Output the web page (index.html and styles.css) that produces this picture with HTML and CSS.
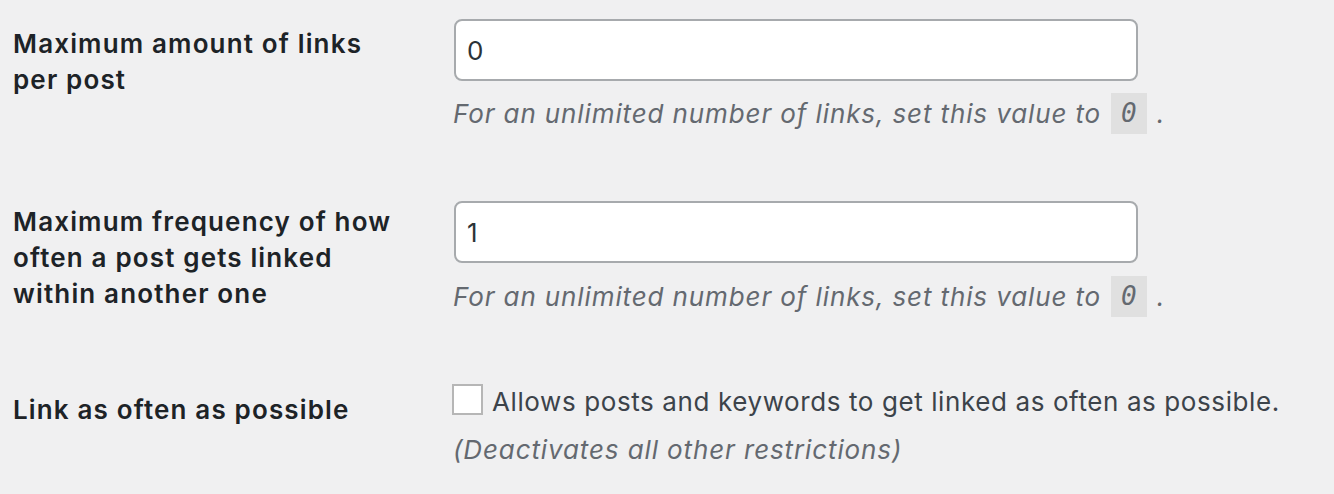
FILE: index.html
```html
<!DOCTYPE html>
<html lang="en">
<head>
<meta charset="utf-8">
<title>Settings</title>
<link rel="stylesheet" href="styles.css">
</head>
<body>
<div class="form-table">
  <div class="row row-1">
    <div class="th">Maximum amount of links per post</div>
    <div class="td">
      <input class="text-input" type="text" value="0">
      <p class="description">For an unlimited number of links, set this value to <code>0</code>.</p>
    </div>
  </div>
  <div class="row row-2">
    <div class="th">Maximum frequency of how often a post gets linked within another one</div>
    <div class="td">
      <input class="text-input" type="text" value="1">
      <p class="description">For an unlimited number of links, set this value to <code>0</code>.</p>
    </div>
  </div>
  <div class="row row-3">
    <div class="th">Link as often as possible</div>
    <div class="td">
      <label class="check-label"><span class="checkbox"></span>Allows posts and keywords to get linked as often as possible.</label>
      <p class="description plain">(Deactivates all other restrictions)</p>
    </div>
  </div>
</div>
</body>
</html>
```
FILE: styles.css
```css
html, body {
  margin: 0;
  padding: 0;
  background: #f0f0f1;
}
body {
  font-family: Inter, "Noto Sans", "Liberation Sans", sans-serif;
  color: #3c434a;
  width: 1334px;
  height: 494px;
  overflow: hidden;
}
.form-table {
  padding-left: 13px;
}
.row {
  display: grid;
  grid-template-columns: 440px 684px;
  align-items: start;
}
.th {
  font-size: 26px;
  font-weight: 600;
  line-height: 36px;
  letter-spacing: 1.15px;
  color: #1d2327;
  width: 400px;
}
.row-1 { padding-top: 19px; }
.row-1 .th { padding-top: 7px; }
.row-2 { padding-top: 67px; }
.row-2 .th { padding-top: 3px; }
.row-3 { padding-top: 67px; }
.row-3 .th { padding-top: 8px; }

.text-input {
  display: block;
  box-sizing: border-box;
  width: 684px;
  height: 62px;
  margin: 0 0 0 1px;
  padding: 0 11px;
  border: 2px solid #a7aaad;
  border-radius: 8px;
  background: #fff;
  font-family: inherit;
  font-size: 26px;
  letter-spacing: 0.6px;
  color: #2c3338;
  outline: none;
}
.description {
  margin: 11px 0 0 0;
  display: flex;
  align-items: center;
  height: 42px;
  font-size: 26px;
  font-style: italic;
  letter-spacing: 0.88px;
  color: #646970;
  white-space: nowrap;
}
.row-2 .description { margin-top: 12px; }
.description code {
  display: inline-block;
  margin: 0 10px 0 10px;
  padding: 0 10px;
  height: 41px;
  line-height: 41px;
  background: #e0e0e0;
  font-family: "DejaVu Sans Mono", monospace;
  font-size: 26px;
  font-style: italic;
  letter-spacing: 0;
  color: #646970;
}
.check-label {
  display: flex;
  align-items: flex-start;
  font-size: 26px;
  line-height: 36px;
  letter-spacing: 0.6px;
  color: #3c434a;
  white-space: nowrap;
}
.checkbox {
  box-sizing: border-box;
  width: 31px;
  height: 31px;
  margin: 0 9px 0 -1px;
  border: 2px solid #b6b6b6;
  background: #fff;
  flex: none;
}
.description.plain {
  display: block;
  height: auto;
  line-height: 36px;
  margin-top: 12px;
}
```
